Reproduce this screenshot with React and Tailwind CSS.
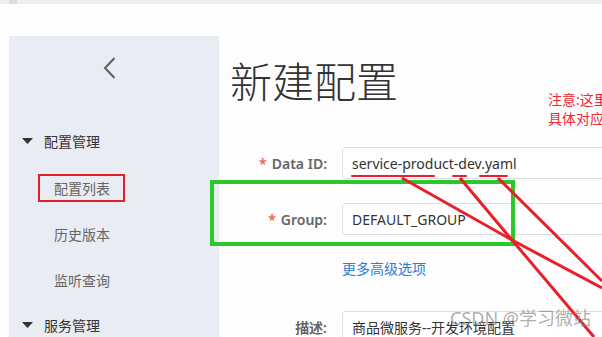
import React from "react";

const subItems = ["配置列表", "历史版本", "监听查询"];

const Caret = () => (
  <svg width="11" height="7" viewBox="0 0 11 7" className="flex-none">
    <polygon points="0,0 11,0 5.5,6" fill="#333" />
  </svg>
);

const FormRow = ({ label, required, value, className = "" }) => (
  <div className={`flex items-center ${className}`}>
    <div className="w-[108px] flex-none text-right text-[14px] font-semibold text-[#666] whitespace-nowrap">
      {required && <span className="text-[#f5603a] mr-[5px]">*</span>}
      {label}
    </div>
    <div className="ml-[15px] w-[320px] flex-none h-[32px] border border-[#dcdee3] rounded-[3px] bg-white flex items-center pl-[9px] text-[14px] text-[#333] whitespace-nowrap">
      {value}
    </div>
  </div>
);

export default function App() {
  return (
    <div className="relative w-[602px] h-[337px] overflow-hidden bg-[#fdfdfe] font-['Noto_Sans','Noto_Sans_CJK_SC',sans-serif]">
      <div className="h-[4px] bg-[#eeeff3]">
        <div className="ml-[9px] w-[8px] h-full bg-[#dcdde3]" />
      </div>

      <div className="flex mt-[32px] pl-[9px]">
        {/* sidebar */}
        <div className="w-[210px] h-[301px] flex-none bg-[#e9ecf2]">
          <div className="h-[64px] flex items-center pl-[94px]">
            <svg width="14" height="24" viewBox="0 0 14 24">
              <polyline
                points="11.5,2 2,12 11.5,22"
                fill="none"
                stroke="#56606e"
                strokeWidth="2"
              />
            </svg>
          </div>
          <div className="mt-[21px] h-[40px] flex items-center pl-[13px] gap-[11px] text-[14px] text-[#333]">
            <Caret />
            <span>配置管理</span>
          </div>
          <div className="mt-[13px] flex flex-col gap-[18px]">
            {subItems.map((item, i) => (
              <div
                key={item}
                className={`ml-[29px] w-[87px] h-[28px] flex items-center pl-[14px] border-2 text-[14px] text-[#666] ${
                  i === 0 ? "border-[#e0202a]" : "border-transparent"
                }`}
              >
                {item}
              </div>
            ))}
          </div>
          <div className="mt-[11px] h-[40px] flex items-center pl-[13px] gap-[11px] text-[14px] text-[#333]">
            <Caret />
            <span>服务管理</span>
          </div>
        </div>

        {/* main */}
        <div className="flex-1 min-w-0">
          <div className="flex items-start pl-[11px] pt-[22px]">
            <div className="text-[42px] leading-[48px] font-light text-[#333] whitespace-nowrap">
              新建配置
            </div>
            <div className="ml-[150px] mt-[32px] text-[14px] leading-[19px] text-[#ee2a3a] whitespace-nowrap">
              <div>注意:这里的 Data ID 需与服务名对应</div>
              <div>具体对应规则见文档</div>
            </div>
          </div>

          <FormRow
            className="mt-[19px]"
            required
            label="Data ID:"
            value="service-product-dev.yaml"
          />
          <FormRow
            className="mt-[24px]"
            required
            label="Group:"
            value="DEFAULT_GROUP"
          />
          <div className="mt-[24px] ml-[123px] text-[14px] leading-[20px] text-[#2a7ed9]">
            更多高级选项
          </div>
          <FormRow
            className="mt-[32px]"
            label="描述:"
            value="商品微服务--开发环境配置"
          />
        </div>
      </div>

      {/* annotations */}
      <div className="absolute left-[210px] top-[180px] w-[305px] h-[66px] border-4 border-[#2bc82b] pointer-events-none" />
      <svg
        className="absolute inset-0 pointer-events-none"
        width="602"
        height="337"
        viewBox="0 0 602 337"
      >
        <g stroke="#e8202a" strokeWidth="2" strokeLinecap="round">
          <line x1="352" y1="176" x2="434" y2="176" />
          <line x1="453" y1="176" x2="466" y2="176" />
          <line x1="480" y1="176" x2="507" y2="176" />
        </g>
        <g stroke="#e8202a" strokeWidth="3">
          <line x1="402" y1="178" x2="512" y2="240" />
          <line x1="460" y1="178" x2="512" y2="240" />
          <line x1="498" y1="178" x2="602" y2="281" />
          <line x1="512" y1="240" x2="602" y2="288" />
          <line x1="512" y1="240" x2="594" y2="337" />
        </g>
      </svg>
      <div className="absolute left-[450px] top-[306px] text-[18px] leading-[24px] text-[#8a8a8a]/70 whitespace-nowrap pointer-events-none">
        CSDN @学习微站
      </div>
    </div>
  );
}
